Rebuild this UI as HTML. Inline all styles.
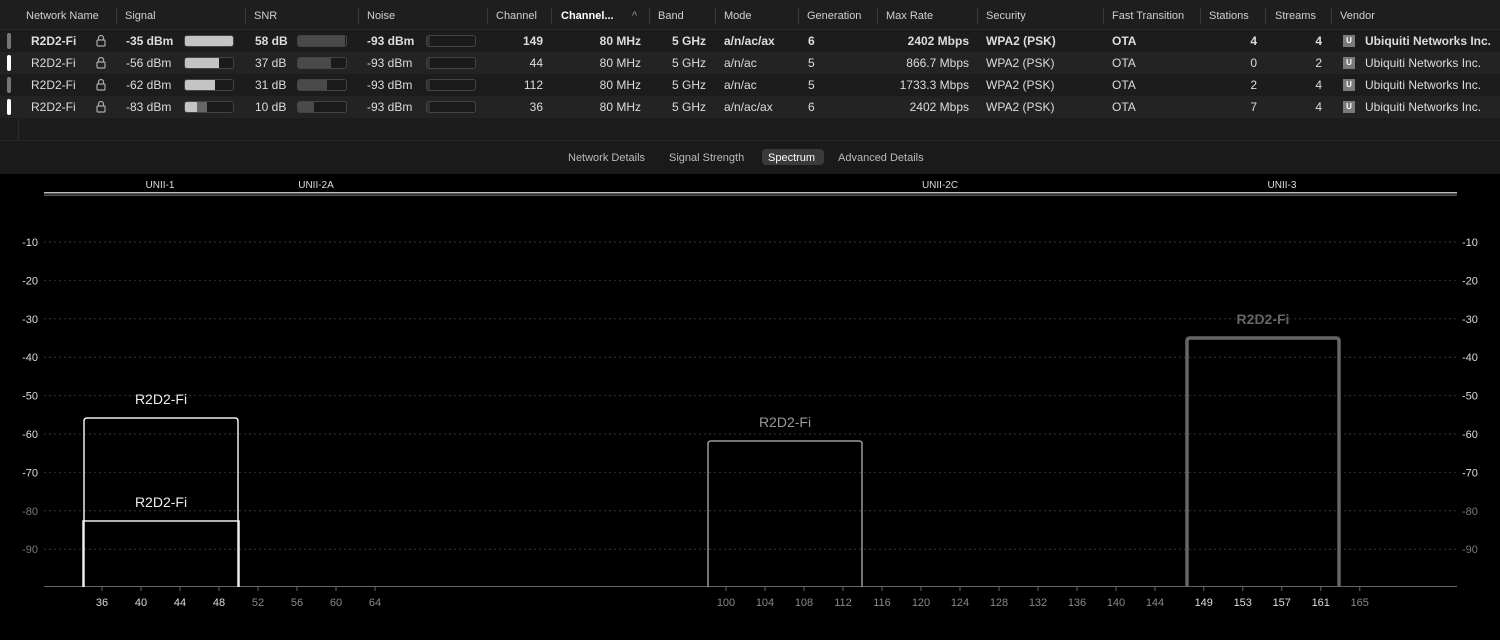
<!DOCTYPE html>
<html><head><meta charset="utf-8"><style>
*{margin:0;padding:0;box-sizing:border-box}
body{width:1500px;height:640px;background:#000;font-family:"Liberation Sans",sans-serif;color:#ddd;position:relative;overflow:hidden}
.t{position:absolute;font-size:12px;white-space:nowrap;line-height:14px}
.r{text-align:right}
.h{position:absolute;font-size:11px;color:#d0d0d0;top:10px;white-space:nowrap}
.sep{position:absolute;top:8px;width:1px;height:16px;background:#3a3a3a}
.row{position:absolute;left:0;width:1500px;height:22px}
.bar{position:absolute;width:50px;height:12px;border-radius:3px;border:1px solid #444;background:#1a1a1a;overflow:hidden}
.bar i{position:absolute;left:0;top:0;bottom:0}
.ind{position:absolute;left:7px;width:4px;height:16px;border-radius:2px}
.u{position:absolute;left:1343px;width:12px;height:12px;background:#7a7a7a;color:#fff;font-size:8px;font-weight:bold;text-align:center;line-height:12px}
</style></head><body>
<div style="position:absolute;left:0;top:0;width:1500px;height:140px;background:#1c1c1c"></div>
<div style="position:absolute;left:0;top:0;width:1500px;height:30px;background:#1e1e1e;border-bottom:1px solid #2a2a2a"></div>
<div style="position:absolute;left:18px;top:30px;width:1px;height:110px;background:#2c2c2c"></div>
<div class="h" style="left:26px">Network Name</div><div class="sep" style="left:116px"></div>
<div class="h" style="left:125px">Signal</div><div class="sep" style="left:245px"></div>
<div class="h" style="left:254px">SNR</div><div class="sep" style="left:358px"></div>
<div class="h" style="left:367px">Noise</div><div class="sep" style="left:487px"></div>
<div class="h" style="left:496px">Channel</div><div class="sep" style="left:551px"></div>
<div class="h" style="left:561px;font-weight:bold;color:#fff">Channel...</div><div class="h" style="left:632px;color:#999">^</div><div class="sep" style="left:649px"></div>
<div class="h" style="left:658px">Band</div><div class="sep" style="left:715px"></div>
<div class="h" style="left:724px">Mode</div><div class="sep" style="left:798px"></div>
<div class="h" style="left:807px">Generation</div><div class="sep" style="left:877px"></div>
<div class="h" style="left:886px">Max Rate</div><div class="sep" style="left:977px"></div>
<div class="h" style="left:986px">Security</div><div class="sep" style="left:1103px"></div>
<div class="h" style="left:1112px">Fast Transition</div><div class="sep" style="left:1200px"></div>
<div class="h" style="left:1209px">Streams</div><div class="sep" style="left:1265px"></div>
<div class="h" style="left:1275px">Streams</div><div class="sep" style="left:1331px"></div>
<div class="h" style="left:1340px">Vendor</div>
<div style="position:absolute;left:1209px;top:10px;width:55px;height:14px;background:#1e1e1e;font-size:11px;color:#d0d0d0">Stations</div>

<!-- rows -->
<div class="row" style="top:30px;background:#1c1c1c;font-weight:bold"></div>
<div class="row" style="top:52px;background:#232323"></div>
<div class="row" style="top:74px;background:#1c1c1c"></div>
<div class="row" style="top:96px;background:#232323"></div>

<div id="rows"></div>
<script>
var R=[
[30,'#777',1,'-35 dBm',1,0,'58 dB',.98,'149','4','4','a/n/ac/ax','6','2402 Mbps'],
[52,'#fff',0,'-56 dBm',.7,0,'37 dB',.68,'44','0','2','a/n/ac','5','866.7 Mbps'],
[74,'#777',0,'-62 dBm',.63,0,'31 dB',.6,'112','2','4','a/n/ac','5','1733.3 Mbps'],
[96,'#fff',0,'-83 dBm',.25,.2,'10 dB',.33,'36','7','4','a/n/ac/ax','6','2402 Mbps']];
var h='';
R.forEach(function(r){var y=r[0]+4,fw=r[2]?'font-weight:bold;':'';
h+='<div class="ind" style="top:'+(r[0]+3)+'px;background:'+r[1]+'"></div>';
function t(x,s,al,w){return '<div class="t'+(al?' r':'')+'" style="'+fw+'top:'+y+'px;'+(al?'left:'+(x-w)+'px;width:'+w+'px':'left:'+x+'px')+'">'+s+'</div>';}
h+=t(31,'R2D2-Fi');
h+='<svg style="position:absolute;left:96px;top:'+(r[0]+4)+'px" width="10" height="13"><path d="M2.5 6V4a2.5 2.5 0 0 1 5 0v2" fill="none" stroke="#aaa" stroke-width="1.2"/><rect x="1" y="6" width="8" height="6" rx="1" fill="none" stroke="#aaa" stroke-width="1.2"/></svg>';
h+=t(126,r[3]);
h+='<div class="bar" style="left:184px;top:'+(r[0]+5)+'px"><i style="width:'+(r[4]*100)+'%;background:#c4c4c4"></i>'+(r[5]?'<i style="left:25%;width:20%;background:#666"></i>':'')+'</div>';
h+=t(255,r[6]);
h+='<div class="bar" style="left:297px;top:'+(r[0]+5)+'px"><i style="width:'+(r[7]*100)+'%;background:#4a4a4a"></i></div>';
h+=t(367,'-93 dBm');
h+='<div class="bar" style="left:426px;top:'+(r[0]+5)+'px"><i style="width:6%;background:#333"></i></div>';
h+=t(543,r[8],1,40)+t(641,'80 MHz',1,60)+t(706,'5 GHz',1,50)+t(724,r[11])+t(808,r[12])+t(969,r[13],1,90)+t(986,'WPA2 (PSK)')+t(1112,'OTA')+t(1257,r[9],1,30)+t(1322,r[10],1,30);
h+='<div class="u" style="top:'+(r[0]+5)+'px">U</div>'+t(1365,'Ubiquiti Networks Inc.');
});
document.getElementById('rows').innerHTML=h;
</script>

<!-- tabs -->
<div style="position:absolute;left:0;top:140px;width:1500px;height:34px;background:#1a1a1a;border-top:1px solid #262626"></div>
<div class="t" style="left:568px;top:151px;font-size:11px;color:#bbb">Network Details</div>
<div class="t" style="left:669px;top:151px;font-size:11px;color:#bbb">Signal Strength</div>
<div style="position:absolute;left:762px;top:149px;width:62px;height:16px;border-radius:4px;background:#3a3a3a"></div>
<div class="t" style="left:768px;top:151px;font-size:11px;color:#fff">Spectrum</div>
<div class="t" style="left:838px;top:151px;font-size:11px;color:#bbb">Advanced Details</div>

<svg id="ch" style="position:absolute;left:0;top:0" width="1500" height="640" font-family="Liberation Sans, sans-serif"></svg>
<script>
var s='';
s+='<text x="160" y="188" font-size="10" fill="#ddd" text-anchor="middle">UNII-1</text><text x="316" y="188" font-size="10" fill="#ddd" text-anchor="middle">UNII-2A</text><text x="940" y="188" font-size="10" fill="#ddd" text-anchor="middle">UNII-2C</text><text x="1282" y="188" font-size="10" fill="#ddd" text-anchor="middle">UNII-3</text>';
s+='<rect x="44" y="192" width="1413" height="1.5" fill="#bbb"/><rect x="44" y="194.5" width="1413" height="1.5" fill="#555"/>';
for(var k=0;k<9;k++){var y=242+38.4*k,c=k<7?'#ddd':'#777',l='-'+(k+1)*10;
s+='<line x1="44" x2="1457" y1="'+y+'" y2="'+y+'" stroke="#333" stroke-dasharray="2 3"/>';
s+='<text x="38" y="'+(y+4)+'" font-size="11" fill="'+c+'" text-anchor="end">'+l+'</text><text x="1462" y="'+(y+4)+'" font-size="11" fill="'+c+'">'+l+'</text>';}
s+='<line x1="44" x2="1457" y1="586.5" y2="586.5" stroke="#666"/>';
function X(c){return 102+(c-36)*9.75;}
var ch=[];for(var c=36;c<=64;c+=4)ch.push(c);for(c=100;c<=144;c+=4)ch.push(c);for(c=149;c<=165;c+=4)ch.push(c);
ch.forEach(function(c){var x=X(c),col=(c<=48||(c>=149&&c<=161))?'#ddd':'#888';
s+='<line x1="'+x+'" x2="'+x+'" y1="586" y2="591" stroke="#666"/><text x="'+x+'" y="606" font-size="11" fill="'+col+'" text-anchor="middle">'+c+'</text>';});
function box(x1,x2,top,col,w,ly,fw){s+='<path d="M'+x1+' 587V'+(top+3)+'Q'+x1+' '+top+' '+(x1+3)+' '+top+'H'+(x2-3)+'Q'+x2+' '+top+' '+x2+' '+(top+3)+'V587" fill="none" stroke="'+col+'" stroke-width="'+w+'"/><text x="'+((x1+x2)/2)+'" y="'+ly+'" font-size="14" fill="'+col+'" text-anchor="middle"'+(fw?' font-weight="bold"':'')+'>R2D2-Fi</text>';}
box(84,238,418,'#eee',1.5,404);
s+='<path d="M83 587V521H239V587" fill="none" stroke="#eee" stroke-width="1.5"/><text x="161" y="507" font-size="14" fill="#eee" text-anchor="middle">R2D2-Fi</text>';
box(708,862,441,'#999',1.5,427);
box(1187,1339,338,'#666',3.5,324,1);
document.getElementById('ch').innerHTML=s;
</script>
</body></html>
